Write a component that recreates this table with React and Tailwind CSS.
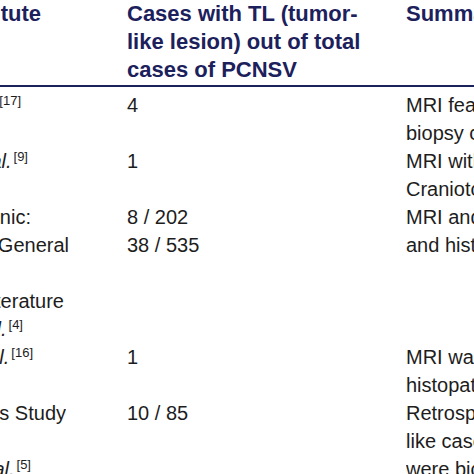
import React from "react";

const Sup = ({ children }) => (
  <span className="relative -top-[7px] text-[13px] ml-[2px]">{children}</span>
);

const L = ({ w, children }) => (
  <div className="h-[28px] flex justify-end overflow-hidden whitespace-nowrap" style={{ width: w }}>
    <span>{children}</span>
  </div>
);

const Line = ({ children }) => (
  <div className="h-[28px] whitespace-nowrap">{children}</div>
);

const Row = ({ left, mid, right }) => (
  <div className="grid grid-cols-[127px_279px_1fr]">
    <div className="flex flex-col">{left}</div>
    <div className="flex flex-col">{mid}</div>
    <div className="flex flex-col overflow-hidden">{right}</div>
  </div>
);

export default function App() {
  return (
    <div
      className="w-[474px] h-[474px] overflow-hidden bg-white"
      style={{ fontFamily: '"Liberation Sans", Arial, sans-serif' }}
    >
      <div className="grid grid-cols-[127px_279px_1fr] border-b-2 border-[#1c215c] pb-[1px] text-[22px] leading-[28px] font-bold text-[#1c215c]">
        <div className="flex justify-end overflow-hidden whitespace-nowrap w-[41px] h-[28px]">
          <span>Institute</span>
        </div>
        <div>
          <div className="whitespace-nowrap">Cases with TL (tumor-</div>
          <div className="whitespace-nowrap">like lesion) out of total</div>
          <div className="whitespace-nowrap">cases of PCNSV</div>
        </div>
        <div className="overflow-hidden whitespace-nowrap">Summary</div>
      </div>

      <div className="pt-[4px] text-[20px] leading-[28px] text-[#1d1d1d]">
        <Row
          left={[
            <L key="a" w="21px">
              <span className="italic">al.</span>
              <Sup>[17]</Sup>
            </L>,
          ]}
          mid={[<Line key="a">4</Line>]}
          right={[
            <Line key="a">MRI features and</Line>,
            <Line key="b">biopsy confirmed</Line>,
          ]}
        />
        <Row
          left={[
            <L key="a" w="28px">
              <span className="italic">et al.</span>
              <Sup>[9]</Sup>
            </L>,
          ]}
          mid={[<Line key="a">1</Line>]}
          right={[
            <Line key="a">MRI with biopsy</Line>,
            <Line key="b">Craniotomy</Line>,
          ]}
        />
        <Row
          left={[
            <L key="a" w="31px">Mayo Clinic:</L>,
            <L key="b" w="69px">Massachusetts General</L>,
            <L key="c" w="68px"></L>,
            <L key="d" w="64px">and literature</L>,
            <L key="e" w="23px">
              <span className="italic">et al.</span>
              <Sup>[4]</Sup>
            </L>,
          ]}
          mid={[
            <Line key="a">8 / 202</Line>,
            <Line key="b">38 / 535</Line>,
          ]}
          right={[
            <Line key="a">MRI and biopsy</Line>,
            <Line key="b">and histopathology</Line>,
            <Line key="c"></Line>,
            <Line key="d"></Line>,
            <Line key="e"></Line>,
          ]}
        />
        <Row
          left={[
            <L key="a" w="33px">
              <span className="italic">et al.</span>
              <Sup>[16]</Sup>
            </L>,
          ]}
          mid={[<Line key="a">1</Line>]}
          right={[
            <Line key="a">MRI was done and</Line>,
            <Line key="b">histopathology</Line>,
          ]}
        />
        <Row
          left={[
            <L key="a" w="66px">Cases Study</L>,
            <L key="b" w="66px"></L>,
            <L key="c" w="31px">
              <span className="italic">et al.</span>
              <Sup>[5]</Sup>
            </L>,
          ]}
          mid={[<Line key="a">10 / 85</Line>]}
          right={[
            <Line key="a">Retrospective tumor-</Line>,
            <Line key="b">like cases which</Line>,
            <Line key="c">were biopsied</Line>,
          ]}
        />
      </div>
    </div>
  );
}
